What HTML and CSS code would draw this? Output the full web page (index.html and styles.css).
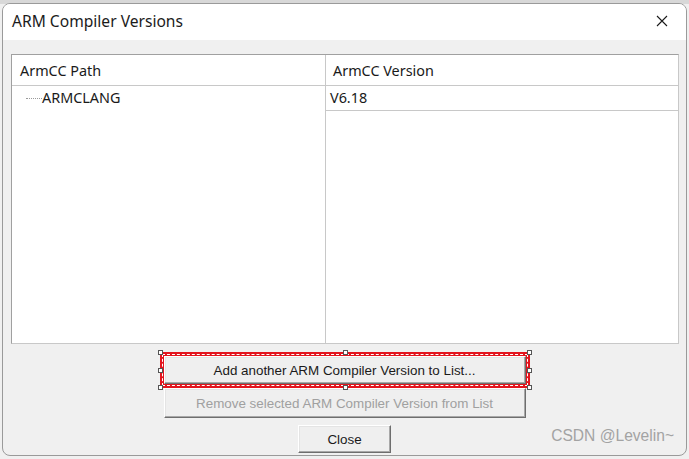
FILE: index.html
```html
<!DOCTYPE html>
<html>
<head>
<meta charset="utf-8">
<link rel="stylesheet" href="styles.css">
</head>
<body>
<div class="backdrop"></div>
<div class="window">
  <div class="titlebar">
    <span class="title">ARM Compiler Versions</span>
    <svg class="close-x" width="12" height="12" viewBox="0 0 12 12"><path d="M1 1 L11 11 M11 1 L1 11" stroke="#1a1a1a" stroke-width="1.1" fill="none"/></svg>
  </div>
  <div class="body">
    <div class="listbox">
      <div class="col col-left">
        <div class="head">ArmCC Path</div>
        <div class="row"><span class="dots"></span>ARMCLANG</div>
      </div>
      <div class="col col-right">
        <div class="head">ArmCC Version</div>
        <div class="row row-line">V6.18</div>
      </div>
    </div>
    <div class="buttons">
      <div class="focus-wrap">
        <button class="btn btn-add">Add another ARM Compiler Version to List...</button>
        <div class="annot">
          <span class="h tl"></span><span class="h tm"></span><span class="h tr"></span>
          <span class="h ml"></span><span class="h mr"></span>
          <span class="h bl"></span><span class="h bm"></span><span class="h br"></span>
        </div>
      </div>
      <button class="btn btn-remove" disabled>Remove selected ARM Compiler Version from List</button>
      <button class="btn btn-close">Close</button>
    </div>
    <div class="watermark">CSDN @Levelin~</div>
  </div>
</div>
</body>
</html>
```

FILE: styles.css
```css
html, body {
  margin: 0;
  padding: 0;
}
body {
  width: 689px;
  height: 459px;
  background: #f0f0f0;
  position: relative;
  overflow: hidden;
  font-family: "Noto Sans", "Open Sans", sans-serif;
}
.backdrop {
  position: absolute;
  left: 0;
  top: 0;
  width: 689px;
  height: 4px;
  background: #d8d8d8;
}
.window {
  position: relative;
  margin: 3px 0 0 2px;
  width: 683px;
  height: 451px;
  border: 1px solid #9a9a9a;
  border-radius: 8px;
  background: #f0f0f0;
  overflow: hidden;
  display: flex;
  flex-direction: column;
}
.titlebar {
  height: 36px;
  flex: none;
  background: #ffffff;
  display: flex;
  align-items: center;
  justify-content: space-between;
  padding: 0 18px 0 9px;
}
.title {
  font-family: "Noto Sans", sans-serif;
  font-size: 15.6px;
  color: #1b1b1b;
  margin-top: -2px;
}
.close-x {
  margin-top: -2px;
}
.body {
  flex: 1;
  position: relative;
  padding: 14px 0 0 8px;
}
.listbox {
  width: 666px;
  height: 288px;
  background: #ffffff;
  border: 1px solid #a0a0a0;
  border-right-color: #c8c8c8;
  border-bottom-color: #c8c8c8;
  display: grid;
  grid-template-columns: 314px 1fr;
  font-family: "Noto Sans", sans-serif;
  font-size: 14.4px;
  color: #1a1a1a;
}
.col-left {
  border-right: 1px solid #c8c8c8;
}
.head {
  height: 30px;
  line-height: 31px;
  border-bottom: 1px solid #c8c8c8;
  padding-left: 8px;
}
.col-right .head {
  padding-left: 7px;
}
.row {
  height: 24px;
  line-height: 24px;
  display: flex;
  align-items: center;
}
.col-left .row {
  padding-left: 14px;
}
.row-name {
  letter-spacing: 0.4px;
}
.dots {
  width: 16px;
  height: 0;
  border-top: 1px dotted #9a9a9a;
}
.row-line {
  padding-left: 4px;
  border-bottom: 1px solid #c8c8c8;
}
.buttons {
  display: flex;
  flex-direction: column;
  align-items: center;
  margin-top: 12px;
  margin-left: -8px;
}
.btn {
  font-family: "Liberation Sans", Arial, sans-serif;
  font-size: 13.4px;
  background: #efefef;
  color: #1a1a1a;
  border: 1px solid;
  border-color: #ffffff #6e6e6e #6e6e6e #ffffff;
  box-shadow: inset -1px -1px 0 #a8a8a8, inset 1px 1px 0 #e4e4e4;
  padding: 0;
  margin: 0;
}
.focus-wrap {
  position: relative;
}
.btn-add {
  width: 362px;
  height: 28px;
  display: block;
}
.annot {
  position: absolute;
  left: -4px;
  top: -4px;
  right: -4px;
  bottom: -4px;
  border: 4px solid #e3141d;
  outline: 1px dashed #ffffff;
  outline-offset: -3px;
}
.h {
  position: absolute;
  width: 5px;
  height: 5px;
  background: #ffffff;
  border: 1px solid #555555;
  box-sizing: border-box;
}
.tl { left: -6px; top: -6px; }
.tm { left: calc(50% - 2px); top: -6px; }
.tr { right: -6px; top: -6px; }
.ml { left: -6px; top: calc(50% - 2px); }
.mr { right: -6px; top: calc(50% - 2px); }
.bl { left: -6px; bottom: -6px; }
.bm { left: calc(50% - 2px); bottom: -6px; }
.br { right: -6px; bottom: -6px; }
.btn-remove {
  width: 362px;
  height: 30px;
  margin-top: 4px;
  color: #a0a0a0;
}
.btn-close {
  width: 93px;
  height: 28px;
  margin-top: 7px;
}
.watermark {
  position: absolute;
  right: 12px;
  bottom: 10px;
  font-family: "Liberation Sans", Arial, sans-serif;
  font-size: 15.6px;
  color: #a3a3a3;
}
```
